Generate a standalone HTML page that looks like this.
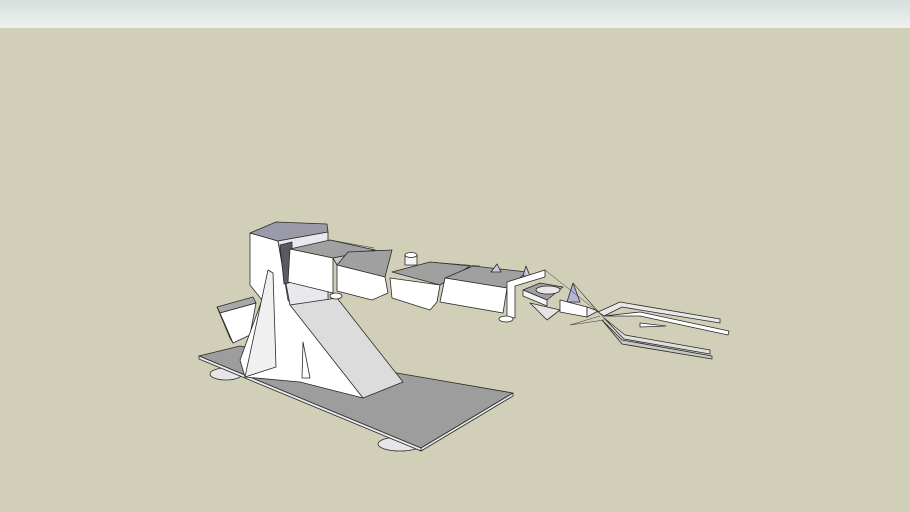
<!DOCTYPE html>
<html><head><style>
html,body{margin:0;padding:0;width:910px;height:512px;overflow:hidden;background:#d1cfb7}
</style></head><body>
<svg width="910" height="512" viewBox="0 0 910 512" xmlns="http://www.w3.org/2000/svg">
<defs><linearGradient id="sky" x1="0" y1="0" x2="0" y2="1"><stop offset="0" stop-color="#d5dfdd"/><stop offset="1" stop-color="#eef2f0"/></linearGradient></defs>
<rect x="0" y="0" width="910" height="28" fill="url(#sky)"/>
<rect x="0" y="28" width="910" height="484" fill="#d1cfb7"/>
<g stroke="#2a2a2a" stroke-width="0.8" stroke-linejoin="round">
<!-- feet -->
<ellipse cx="226" cy="374" rx="16" ry="6" fill="#e6e6ea"/>
<ellipse cx="400" cy="444" rx="22" ry="7" fill="#e6e6ea"/>
<!-- plate -->
<polygon points="199,356 240,346 513,393 421,448" fill="#9d9d9d"/>
<polygon points="199,356 421,448 421,451 199,359" fill="#e8e8e8"/>
<polygon points="421,448 513,393 513,396 421,451" fill="#e8e8e8"/>
<!-- back box -->
<polygon points="217,307 253,297 256,303 220,313" fill="#a8a8a8"/>
<polygon points="217,307 220,313 233,343 230,338" fill="#f4f4f4"/>
<polygon points="220,313 256,303 250,335 233,343" fill="#ffffff"/>
<!-- tower -->
<polygon points="250,233 278,241 288,300 363,398 300,382 245,377 240,360 262,300 250,285" fill="#ffffff"/>
<polygon points="250,233 276,222 327,224 328,232 278,241" fill="#9a9aa8"/>
<polygon points="278,241 328,232 328,300 290,305" fill="#e8e8ee"/>
<polygon points="280,245 292,242 292,282 284,284" fill="#5a5a66"/>
<polygon points="290,305 337,298 403,382 363,398" fill="#dcdcdc"/>
<polygon points="268,270 273,273 276,367 245,377" fill="#f0f0f0"/>
<polygon points="302,378 303,342 310,378" fill="#ffffff"/>
<!-- arm segment 1 -->
<polygon points="290,249 330,240 375,250 333,258" fill="#a0a0a0"/>
<polygon points="290,249 333,258 333,293 288,282" fill="#ffffff"/>
<polygon points="333,258 375,250 376,258 337,265" fill="#c8c8c8"/>
<ellipse cx="336" cy="296" rx="6" ry="3" fill="#ffffff"/>
<!-- segment 2 -->
<polygon points="337,265 348,252 392,250 385,277" fill="#a0a0a0"/>
<polygon points="337,265 385,277 388,293 372,300 337,291" fill="#ffffff"/>
<!-- segment 3 -->
<polygon points="392,272 430,262 470,266 440,285" fill="#a0a0a0"/>
<polygon points="390,278 440,285 437,302 430,310 392,298" fill="#ffffff"/>
<rect x="405" y="255" width="12" height="10" fill="#f4f4f4"/>
<ellipse cx="411" cy="255" rx="6" ry="2.5" fill="#ffffff"/>
<!-- segment 4 -->
<polygon points="445,278 473,266 527,272 507,288" fill="#a0a0a0"/>
<polygon points="445,278 507,288 503,313 440,302" fill="#ffffff"/>
<polygon points="491,272 497,264 501,272" fill="#c8c8e0"/>
<polygon points="523,276 526,266 530,276" fill="#c8c8e0"/>
<!-- bracket -->
<polygon points="507,282 545,270 545,277 515,286 515,318 507,317" fill="#ffffff"/>
<ellipse cx="506" cy="319" rx="7" ry="3" fill="#ffffff"/>
<polygon points="523,290 540,283 563,287 547,300" fill="#a0a0a0"/>
<polygon points="523,290 547,300 547,306 523,296" fill="#f4f4f4"/>
<polygon points="530,303 560,310 547,320" fill="#e4e4e4"/>
<ellipse cx="548" cy="290" rx="12" ry="4" fill="#e8e8e8"/>
<polygon points="567,302 573,283 580,302" fill="#b4b4d6"/>
<polygon points="560,300 587,307 587,317 560,312" fill="#ffffff"/>
<polygon points="587,307 598,311 587,317" fill="#ececec"/>
<!-- fingers -->
<polygon points="598,312 620,302 720,319 720,323 622,307 604,316" fill="#e8e8e8"/>
<polygon points="604,316 640,312 729,331 728,335 640,316" fill="#ffffff"/>
<polygon points="604,318 625,335 710,350 710,354 624,339" fill="#e0e0e0"/>
<polygon points="602,320 622,340 712,356 712,359 622,344" fill="#c8c8c8"/>
<polygon points="640,323 666,326 640,327" fill="#ffffff"/>
</g>
<g stroke="#333" stroke-width="0.5" fill="none">
<line x1="573" y1="283" x2="598" y2="312"/>
<line x1="573" y1="283" x2="604" y2="318"/>
<line x1="545" y1="270" x2="598" y2="312"/>
<line x1="570" y1="325" x2="600" y2="316"/>
<line x1="570" y1="325" x2="604" y2="320"/>
<line x1="440" y1="302" x2="503" y2="313"/>
<line x1="330" y1="240" x2="374" y2="248"/>
<line x1="430" y1="262" x2="480" y2="266"/>
</g>
</svg>
</body></html>
